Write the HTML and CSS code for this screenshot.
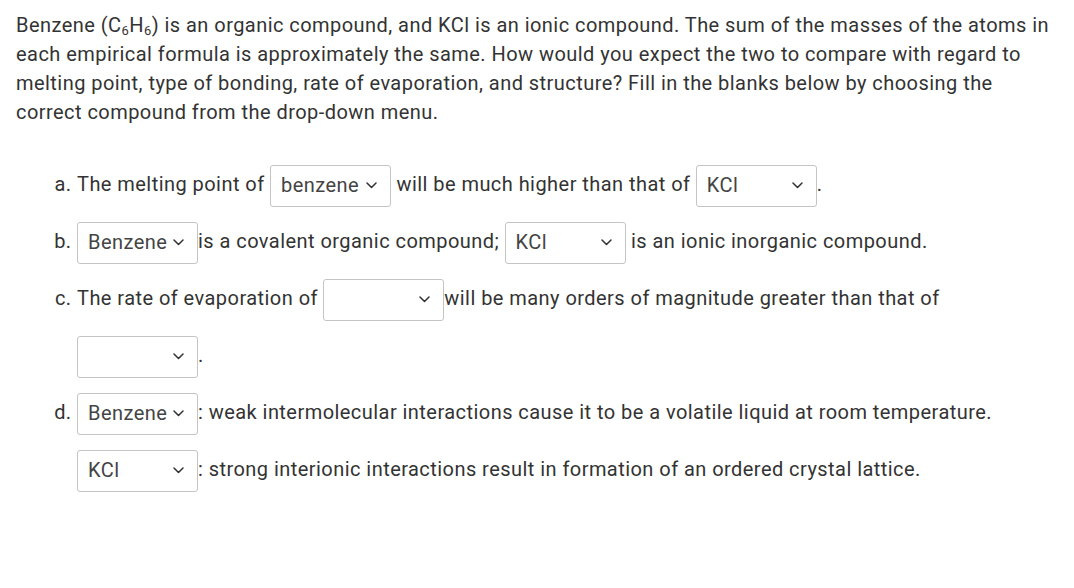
FILE: index.html
```html
<!DOCTYPE html>
<html lang="en">
<head>
<meta charset="utf-8">
<title>Benzene and KCl</title>
<link rel="stylesheet" href="styles.css">
</head>
<body>
<div class="question">
  <p class="intro">Benzene (C<sub>6</sub>H<sub>6</sub>) is an organic compound, and KCl is an ionic compound. The sum of the masses of the atoms in each empirical formula is approximately the same. How would you expect the two to compare with regard to melting point, type of bonding, rate of evaporation, and structure? Fill in the blanks below by choosing the correct compound from the drop-down menu.</p>
  <ol class="parts">
    <li>The melting point of <span class="dropdown"><span class="dd-value">benzene</span><svg class="chev" width="11" height="7" viewBox="0 0 11 7"><polyline points="1,1 5.5,5.5 10,1"/></svg></span> will be much higher than that of <span class="dropdown"><span class="dd-value">KCl</span><svg class="chev" width="11" height="7" viewBox="0 0 11 7"><polyline points="1,1 5.5,5.5 10,1"/></svg></span>.</li>
    <li><span class="dropdown"><span class="dd-value">Benzene</span><svg class="chev" width="11" height="7" viewBox="0 0 11 7"><polyline points="1,1 5.5,5.5 10,1"/></svg></span>is a covalent organic compound; <span class="dropdown"><span class="dd-value">KCl</span><svg class="chev" width="11" height="7" viewBox="0 0 11 7"><polyline points="1,1 5.5,5.5 10,1"/></svg></span> is an ionic inorganic compound.</li>
    <li>The rate of evaporation of <span class="dropdown"><span class="dd-value"></span><svg class="chev" width="11" height="7" viewBox="0 0 11 7"><polyline points="1,1 5.5,5.5 10,1"/></svg></span>will be many orders of magnitude greater than that of <span class="dropdown"><span class="dd-value"></span><svg class="chev" width="11" height="7" viewBox="0 0 11 7"><polyline points="1,1 5.5,5.5 10,1"/></svg></span>.</li>
    <li><span class="dropdown"><span class="dd-value">Benzene</span><svg class="chev" width="11" height="7" viewBox="0 0 11 7"><polyline points="1,1 5.5,5.5 10,1"/></svg></span>: weak intermolecular interactions cause it to be a volatile liquid at room temperature.<br><span class="dropdown"><span class="dd-value">KCl</span><svg class="chev" width="11" height="7" viewBox="0 0 11 7"><polyline points="1,1 5.5,5.5 10,1"/></svg></span>: strong interionic interactions result in formation of an ordered crystal lattice.</li>
  </ol>
</div>
</body>
</html>
```
FILE: styles.css
```css
html, body {
  margin: 0;
  padding: 0;
  background: #ffffff;
}

body {
  font-family: Roboto, "Liberation Sans", sans-serif;
  font-size: 20px;
  letter-spacing: 0.45px;
  line-height: 29px;
  color: #333333;
}

.question {
  padding: 11px 16px 0 16px;
}

.intro {
  margin: 0 0 30px 0;
}

.intro sub {
  font-size: 13px;
  line-height: 0;
  vertical-align: -3px;
}

.parts {
  margin: 0;
  padding: 0 0 0 61px;
  list-style: lower-alpha;
}

.parts li {
  margin: 0;
}

.dropdown {
  display: inline-flex;
  align-items: center;
  justify-content: space-between;
  box-sizing: border-box;
  width: 121px;
  height: 42px;
  margin: 7.5px 0;
  padding: 0 13px 0 10px;
  border: 1px solid #c4c4c4;
  border-radius: 3px;
  vertical-align: middle;
  color: #444444;
  background: #ffffff;
}

.dd-value {
  white-space: nowrap;
}

.chev {
  display: block;
  flex: none;
}

.chev polyline {
  fill: none;
  stroke: #333333;
  stroke-width: 1.5;
  stroke-linecap: round;
  stroke-linejoin: round;
}
```
